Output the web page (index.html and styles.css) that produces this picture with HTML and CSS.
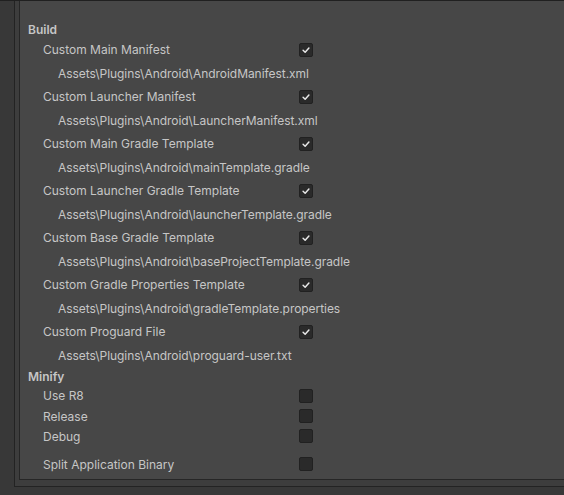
FILE: index.html
```html
<!DOCTYPE html>
<html>
<head>
<meta charset="utf-8">
<link rel="stylesheet" href="styles.css">
</head>
<body>
<div class="frame">
  <div class="panel">
    <div class="heading">Build</div>
    <div class="row label-row"><span class="label">Custom Main Manifest</span><span class="cb checked"><svg viewBox="0 0 14 14"><path d="M3.6 7.3 L6 9.6 L10.4 4.6"/></svg></span></div>
    <div class="row path-row"><span class="path">Assets\Plugins\Android\AndroidManifest.xml</span></div>
    <div class="row label-row"><span class="label">Custom Launcher Manifest</span><span class="cb checked"><svg viewBox="0 0 14 14"><path d="M3.6 7.3 L6 9.6 L10.4 4.6"/></svg></span></div>
    <div class="row path-row"><span class="path">Assets\Plugins\Android\LauncherManifest.xml</span></div>
    <div class="row label-row"><span class="label">Custom Main Gradle Template</span><span class="cb checked"><svg viewBox="0 0 14 14"><path d="M3.6 7.3 L6 9.6 L10.4 4.6"/></svg></span></div>
    <div class="row path-row"><span class="path">Assets\Plugins\Android\mainTemplate.gradle</span></div>
    <div class="row label-row"><span class="label">Custom Launcher Gradle Template</span><span class="cb checked"><svg viewBox="0 0 14 14"><path d="M3.6 7.3 L6 9.6 L10.4 4.6"/></svg></span></div>
    <div class="row path-row"><span class="path">Assets\Plugins\Android\launcherTemplate.gradle</span></div>
    <div class="row label-row"><span class="label">Custom Base Gradle Template</span><span class="cb checked"><svg viewBox="0 0 14 14"><path d="M3.6 7.3 L6 9.6 L10.4 4.6"/></svg></span></div>
    <div class="row path-row"><span class="path">Assets\Plugins\Android\baseProjectTemplate.gradle</span></div>
    <div class="row label-row"><span class="label">Custom Gradle Properties Template</span><span class="cb checked"><svg viewBox="0 0 14 14"><path d="M3.6 7.3 L6 9.6 L10.4 4.6"/></svg></span></div>
    <div class="row path-row"><span class="path">Assets\Plugins\Android\gradleTemplate.properties</span></div>
    <div class="row label-row"><span class="label">Custom Proguard File</span><span class="cb checked"><svg viewBox="0 0 14 14"><path d="M3.6 7.3 L6 9.6 L10.4 4.6"/></svg></span></div>
    <div class="row path-row"><span class="path">Assets\Plugins\Android\proguard-user.txt</span></div>
    <div class="heading minify">Minify</div>
    <div class="row small-row"><span class="label">Use R8</span><span class="cb"></span></div>
    <div class="row small-row"><span class="label">Release</span><span class="cb"></span></div>
    <div class="row small-row"><span class="label">Debug</span><span class="cb"></span></div>
    <div class="row small-row split"><span class="label">Split Application Binary</span><span class="cb"></span></div>
  </div>
</div>
</body>
</html>
```

FILE: styles.css
```css
html, body {
  margin: 0;
  padding: 0;
}
body {
  background: #383838;
  border-top: 1px solid #202020;
  width: 564px;
  height: 494px;
  font-family: Inter, "Noto Sans", sans-serif;
  font-size: 12px;
  color: #c6c6c6;
  overflow: hidden;
}
.frame {
  margin-left: 14px;
  width: 546px;
  height: 480px;
  background: #3d3d3d;
  border-left: 1px solid #232323;
  border-bottom: 1px solid #232323;
  padding-left: 4px;
  padding-bottom: 5px;
  box-sizing: content-box;
}
.panel {
  height: 479px;
  background: #474747;
  border-left: 1px solid #262626;
  border-bottom: 1px solid #262626;
  padding-top: 21px;
  box-sizing: border-box;
  display: flex;
  flex-direction: column;
}
.heading {
  height: 16px;
  line-height: 16px;
  font-weight: 600;
  padding-left: 8px;
}
.heading.minify {
  height: 18.5px;
  line-height: 19px;
}
.row {
  display: flex;
  align-items: center;
  padding-left: 23px;
}
.label-row { height: 23px; }
.path-row { height: 24px; }
.small-row { height: 20.4px; }
.small-row.split { margin-top: 7.5px; }
.label {
  width: 256px;
  flex: none;
  white-space: nowrap;
}
.path {
  padding-left: 15px;
  white-space: nowrap;
  letter-spacing: -0.05px;
}
.cb {
  width: 14px;
  height: 14px;
  box-sizing: border-box;
  background: #2a2a2a;
  border: 1px solid #212121;
  border-radius: 2px;
  display: flex;
}
.cb svg {
  width: 12px;
  height: 12px;
}
.cb path {
  fill: none;
  stroke: #e8e8e8;
  stroke-width: 1.7;
  stroke-linecap: round;
  stroke-linejoin: round;
}
```
